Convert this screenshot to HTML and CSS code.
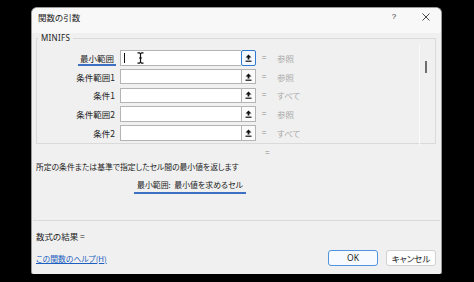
FILE: index.html
```html
<!DOCTYPE html>
<html lang="ja">
<head>
<meta charset="utf-8">
<title>関数の引数</title>
<link rel="stylesheet" href="styles.css">
</head>
<body>
<div class="dialog">
  <div class="titlebar">
    <span class="title">関数の引数</span>
    <span class="help">?</span>
    <span class="close"><svg width="8" height="8" viewBox="0 0 8 8"><path d="M0.5 0.5 L7.5 7.5 M7.5 0.5 L0.5 7.5" stroke="#333" stroke-width="0.9" fill="none"/></svg></span>
  </div>
  <div class="content">
    <fieldset class="group">
      <legend>MINIFS</legend>
      <div class="group-inner">
        <div class="args">
          <label class="arg-label active">最小範囲</label>
          <div class="field focus"><div class="input"><span class="caret"></span><svg class="ibeam" width="7" height="12" viewBox="0 0 7 12"><path d="M0.5 0.8 H2.5 L3.5 1.8 L4.5 0.8 H6.5 M3.5 1.8 V10.2 M0.5 11.2 H2.5 L3.5 10.2 L4.5 11.2 H6.5 M2 6 H5" stroke="#111" stroke-width="1.2" fill="none"/></svg></div><span class="refbtn on"><svg width="7" height="8" viewBox="0 0 7 8"><path d="M3.5 0.5 L6.5 3.5 H4.4 V5.6 H2.6 V3.5 H0.5 Z" fill="#111"/><rect x="0.5" y="6.6" width="6" height="1.2" fill="#111"/></svg></span></div>
          <span class="eq">=</span><span class="val">参照</span>

          <label class="arg-label">条件範囲1</label>
          <div class="field"><div class="input"></div><span class="refbtn"><svg width="7" height="8" viewBox="0 0 7 8"><path d="M3.5 0.5 L6.5 3.5 H4.4 V5.6 H2.6 V3.5 H0.5 Z" fill="#111"/><rect x="0.5" y="6.6" width="6" height="1.2" fill="#111"/></svg></span></div>
          <span class="eq">=</span><span class="val">参照</span>

          <label class="arg-label">条件1</label>
          <div class="field"><div class="input"></div><span class="refbtn"><svg width="7" height="8" viewBox="0 0 7 8"><path d="M3.5 0.5 L6.5 3.5 H4.4 V5.6 H2.6 V3.5 H0.5 Z" fill="#111"/><rect x="0.5" y="6.6" width="6" height="1.2" fill="#111"/></svg></span></div>
          <span class="eq">=</span><span class="val">すべて</span>

          <label class="arg-label">条件範囲2</label>
          <div class="field"><div class="input"></div><span class="refbtn"><svg width="7" height="8" viewBox="0 0 7 8"><path d="M3.5 0.5 L6.5 3.5 H4.4 V5.6 H2.6 V3.5 H0.5 Z" fill="#111"/><rect x="0.5" y="6.6" width="6" height="1.2" fill="#111"/></svg></span></div>
          <span class="eq">=</span><span class="val">参照</span>

          <label class="arg-label">条件2</label>
          <div class="field"><div class="input"></div><span class="refbtn"><svg width="7" height="8" viewBox="0 0 7 8"><path d="M3.5 0.5 L6.5 3.5 H4.4 V5.6 H2.6 V3.5 H0.5 Z" fill="#111"/><rect x="0.5" y="6.6" width="6" height="1.2" fill="#111"/></svg></span></div>
          <span class="eq">=</span><span class="val">すべて</span>
        </div>
        <div class="scroll"><div class="thumb"></div></div>
      </div>
    </fieldset>
    <div class="result-eq"><span class="eq">=</span></div>
    <p class="desc">所定の条件または基準で指定したセル間の最小値を返します</p>
    <div class="summary"><span class="summary-text">最小範囲:&nbsp; 最小値を求めるセル</span></div>
    <div class="sep"></div>
    <div class="formula">数式の結果 =</div>
    <div class="footer">
      <a class="helplink" href="#">この関数のヘルプ(H)</a>
      <div class="buttons">
        <button class="btn primary">OK</button>
        <button class="btn">キャンセル</button>
      </div>
    </div>
  </div>
</div>
</body>
</html>
```
FILE: styles.css
```css
* { box-sizing: border-box; }
html, body {
  margin: 0;
  padding: 0;
  background: #000;
  width: 474px;
  height: 282px;
  overflow: hidden;
}
body {
  font-family: "Noto Sans CJK JP", "Noto Sans", sans-serif;
  font-feature-settings: "palt";
  font-size: 8.5px;
  color: #1a1a1a;
  padding: 7px 0 0 31px;
}
.dialog {
  width: 411px;
  height: 267px;
  background: #f0f0f0;
  border-radius: 6px 6px 2px 2px;
  overflow: hidden;
  border: 1px solid #9a9a9a;
  border-bottom: none;
}
.titlebar {
  height: 25px;
  background: #f8f8f8;
  display: flex;
  align-items: flex-start;
  padding: 4px 0 0 6px;
}
.title {
  flex: 1;
  line-height: 10px;
  color: #222;
}
.help {
  width: 10px;
  line-height: 10px;
  text-align: center;
  font-family: "Liberation Sans", sans-serif;
  font-size: 8px;
  margin-right: 23px;
  color: #333;
}
.close {
  display: flex;
  margin-top: 1px;
  margin-right: 11px;
}
.content {
  padding: 0 5px 0 4px;
}
.group {
  margin: 0;
  padding: 7px 0 3px 0;
  border: 1px solid #dadada;
  height: 111px;
  min-width: 0;
}
.group legend {
  padding: 0 3px;
  margin-left: 1px;
  line-height: 10px;
  font-family: "Noto Sans", sans-serif;
  font-size: 8px;
  letter-spacing: 0.3px;
  color: #222;
}
.group-inner {
  display: flex;
  height: 92px;
}
.args {
  display: grid;
  grid-template-columns: 79px 140px 16px auto;
  grid-auto-rows: 15.5px;
  row-gap: 3.25px;
  align-items: center;
  width: 382px;
}
.arg-label {
  text-align: right;
  padding-right: 1px;
  line-height: 10px;
  color: #222;
}
.arg-label.active {
  justify-self: end;
  padding: 0 2px;
  border-bottom: 2px solid #3d6fc2;
  line-height: 11px;
  margin-top: 3px;
}
.field {
  display: flex;
  height: 15.5px;
  margin-left: 4px;
}
.input {
  flex: 1;
  background: #fff;
  border: 1px solid #b4b4b4;
  border-right: none;
  position: relative;
}
.caret {
  position: absolute;
  left: 3px;
  top: 2px;
  width: 1px;
  height: 10px;
  background: #111;
}
.ibeam {
  position: absolute;
  left: 16px;
  top: 1px;
}
.refbtn {
  width: 15px;
  background: #fbfbfb;
  border: 1px solid #b4b4b4;
  display: flex;
  align-items: center;
  justify-content: center;
}
.refbtn.on {
  border-color: #2e7ad1;
  border-radius: 2px;
  background: #f4f9ff;
}
.eq {
  font-family: "Liberation Sans", sans-serif;
  color: #8a8a8a;
  font-size: 8px;
  text-align: center;
  line-height: 10px;
}
.val {
  color: #a9a9a9;
  line-height: 10px;
  padding-left: 5px;
}
.scroll {
  flex: 1;
  border-left: 1px solid #fafafa;
  margin-top: -6px;
  margin-bottom: -4px;
  position: relative;
}
.thumb {
  position: absolute;
  left: 5px;
  top: 17px;
  width: 2px;
  height: 12px;
  background: #6e6e6e;
}
.result-eq {
  height: 18px;
  display: flex;
  align-items: center;
  padding-left: 229px;
}
.desc {
  margin: 0;
  line-height: 10px;
  height: 10px;
  font-size: 7.8px;
  color: #222;
}
.summary {
  margin-top: 8px;
  padding-left: 98px;
  display: flex;
}
.summary-text {
  line-height: 10px;
  font-size: 7.9px;
  padding: 0 3px 2px 3px;
  border-bottom: 2px solid #3d6fc2;
  color: #222;
}
.sep {
  margin: 26px -4px 0 -3px;
  height: 1px;
  background: #d9d9d9;
}
.formula {
  margin-top: 10px;
  line-height: 10px;
  color: #222;
}
.footer {
  display: flex;
  justify-content: space-between;
  align-items: flex-start;
}
.helplink {
  margin-top: 13px;
  line-height: 10px;
  font-size: 7.8px;
  color: #1d5fc0;
  text-decoration: underline;
}
.buttons {
  display: flex;
  gap: 8px;
  margin-top: 9px;
}
.btn {
  width: 50px;
  height: 16px;
  padding: 0;
  font-family: "Noto Sans CJK JP", "Noto Sans", sans-serif;
  font-feature-settings: "palt";
  font-size: 8.5px;
  line-height: 10px;
  color: #222;
  background: #fdfdfd;
  border: 1px solid #d0d0d0;
  border-radius: 3px;
}
.btn.primary {
  border-color: #4f94dd;
  background: #f7fbff;
  font-family: "Noto Sans", sans-serif;
}
```
